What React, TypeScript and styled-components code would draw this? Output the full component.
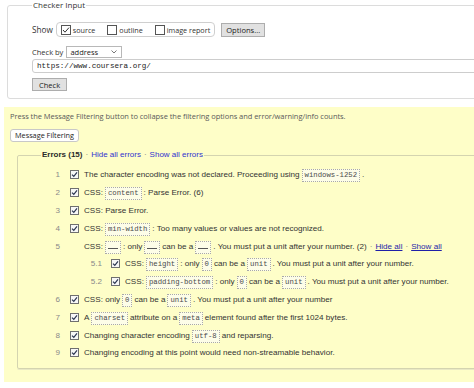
import React from 'react'
import styled, { createGlobalStyle } from 'styled-components'

const GlobalStyle = createGlobalStyle`
  html, body {
    margin: 0;
    padding: 0;
    background: #fff;
    overflow: hidden;
  }
  body {
    width: 474px;
    height: 388px;
  }
`

const Page = styled.div`
  width: 540px;
  font-family: 'Open Sans', 'Noto Sans', sans-serif;
  color: #333;
`

const InputFieldset = styled.fieldset`
  margin: 0 0 0 7px;
  padding: 0 0 7px 24px;
  border: 1px solid #dcdcdc;
  border-radius: 3px;
  display: flex;
  flex-direction: column;
  align-items: flex-start;
`

const InputLegend = styled.legend`
  padding: 0 1px;
  font-size: 8px;
  line-height: 10px;
  color: #333;
`

const ShowRow = styled.div`
  margin-top: 12px;
  display: flex;
  align-items: center;
  gap: 3px;
  font-size: 8.2px;
`

const ShowGroup = styled.div`
  height: 13px;
  display: flex;
  align-items: center;
  gap: 12px;
  padding: 0 4px;
  border: 1px solid #cfcfcf;
  border-radius: 4px;
  font-size: 7.2px;
`

const ShowOption = styled.label`
  display: flex;
  align-items: center;
  gap: 2px;
`

const GrayButton = styled.button`
  height: 14px;
  padding: 0 4px;
  margin: 0 0 0 ${props => props.slot || '0'};
  font-family: 'Open Sans', sans-serif;
  font-size: 7.6px;
  color: #222;
  background: #e1e1e1;
  border: 1px solid #adadad;
  border-radius: 0;
  line-height: 12px;
`

const CheckByRow = styled.div`
  margin-top: 9px;
  display: flex;
  align-items: center;
  gap: 3px;
  font-size: 7.5px;
`

const SelectBox = styled.div`
  width: 56px;
  height: 12px;
  box-sizing: border-box;
  border: 1px solid #b8b8b8;
  display: flex;
  align-items: center;
  justify-content: space-between;
  padding: 0 4px 0 3px;
  font-size: 7.5px;
  color: #222;
`

const UrlInput = styled.div`
  margin-top: 1px;
  width: 470px;
  height: 14px;
  box-sizing: border-box;
  border: 1px solid #cdcdcd;
  border-radius: 3px;
  padding: 0 4px;
  display: flex;
  align-items: center;
  font-family: 'Liberation Mono', monospace;
  font-size: 7.6px;
  color: #222;
`

const CheckButton = styled(GrayButton)`
  margin-top: 5px;
  height: 13px;
  padding: 0 6px;
  font-size: 7.5px;
`

const YellowArea = styled.div`
  margin: 8px 0 0 4px;
  padding: 4px 0 13px 6px;
  background: #fefec8;
`

const Hint = styled.div`
  font-size: 7.5px;
  line-height: 10px;
  letter-spacing: -0.05px;
  color: #5a5a5a;
`

const FilterButton = styled.button`
  margin-top: 5px;
  height: 13px;
  padding: 0 4px;
  font-family: 'Open Sans', sans-serif;
  font-size: 7.3px;
  color: #222;
  background: #fff;
  border: 1px solid #c8c8c8;
  border-radius: 3px;
  line-height: 11px;
`

const ErrorsFieldset = styled.fieldset`
  margin: 7px 0 0 7px;
  padding: 6px 0 6px 23px;
  border: 1px solid #d4d4b0;
  border-radius: 2px;
  box-shadow: 0 1px 0 #e9e9c4;
  font-family: 'Liberation Sans', Arial, sans-serif;
  font-size: 8.1px;
  color: #333;
`

const ErrorsLegend = styled.legend`
  padding: 0 1px;
  font-size: 8px;
  line-height: 10px;
  color: #333;
`

const LegendTitle = styled.span`
  font-weight: 600;
  color: #2a2a2a;
`

const Sep = styled.span`
  color: #777;
  margin: 0 3px;
`

const Link = styled.a`
  color: ${props => (props.slot === 'under' ? '#1f1fa8' : '#3232d0')};
  text-decoration: ${props => (props.slot === 'under' ? 'underline' : 'none')};
  cursor: pointer;
`

const Row = styled.div`
  display: flex;
  align-items: center;
  height: 17.8px;
`

const Num = styled.span`
  width: ${props => props.slot || '19px'};
  flex: none;
  text-align: right;
  color: #8a8a8a;
`

const BoxSlot = styled.span`
  width: 9px;
  height: 9px;
  flex: none;
  margin: 0 5px 0 ${props => props.slot || '10px'};
  display: flex;
`

const Msg = styled.span`
  white-space: nowrap;
`

const Code = styled.code`
  font-family: 'Liberation Mono', monospace;
  font-size: 7.3px;
  color: #4a4a4a;
  background: #fdfde8;
  border: 1px dotted #a9a9a9;
  padding: 1px 2px 2px;
  margin: 0 2px;
`

const Blank = styled.span`
  display: inline-block;
  width: 10px;
  height: 1px;
  background: #555;
  vertical-align: 0;
`

const Tick = ({ size = 9, checked = true }) => (
  <svg width={size} height={size} viewBox="0 0 9 9">
    <rect x="0.5" y="0.5" width="8" height="8" fill="#f7f7f7" stroke="#6f6f6f" />
    {checked && <path d="M2 4.6 L3.8 6.4 L7 2.4" fill="none" stroke="#2b3550" strokeWidth="1.2" />}
  </svg>
)

const OptionBox = ({ checked = false }) => (
  <svg width="10" height="10" viewBox="0 0 10 10">
    <rect x="0.5" y="0.5" width="9" height="9" fill="#fff" stroke="#555" />
    {checked && <path d="M2 5 L4 7.2 L8 2.6" fill="none" stroke="#333" strokeWidth="1" />}
  </svg>
)

const Chevron = () => (
  <svg width="6" height="4" viewBox="0 0 6 4">
    <path d="M0.5 0.5 L3 3 L5.5 0.5" fill="none" stroke="#555" strokeWidth="0.8" />
  </svg>
)

const ErrorRow = ({ n, check = true, nested = false, children }) => (
  <Row>
    <Num slot={nested ? '61px' : '19px'}>{n}</Num>
    <BoxSlot slot={nested ? '9px' : '10px'}>{check && <Tick />}</BoxSlot>
    <Msg>{children}</Msg>
  </Row>
)

const App = () => {
  return (
    <Page>
      <GlobalStyle />
      <InputFieldset>
        <InputLegend>Checker Input</InputLegend>
        <ShowRow>
          <span>Show</span>
          <ShowGroup>
            <ShowOption>
              <OptionBox checked />
              source
            </ShowOption>
            <ShowOption>
              <OptionBox />
              outline
            </ShowOption>
            <ShowOption>
              <OptionBox />
              image report
            </ShowOption>
          </ShowGroup>
          <GrayButton slot="3px">Options...</GrayButton>
        </ShowRow>
        <CheckByRow>
          <span>Check by</span>
          <SelectBox>
            address
            <Chevron />
          </SelectBox>
        </CheckByRow>
        <UrlInput>https://www.coursera.org/</UrlInput>
        <CheckButton>Check</CheckButton>
      </InputFieldset>

      <YellowArea>
        <Hint>
          Press the Message Filtering button to collapse the filtering options and error/warning/info counts.
        </Hint>
        <FilterButton>Message Filtering</FilterButton>
        <ErrorsFieldset>
          <ErrorsLegend>
            <LegendTitle>Errors (15)</LegendTitle>
            <Sep>·</Sep>
            <Link>Hide all errors</Link>
            <Sep>·</Sep>
            <Link>Show all errors</Link>
          </ErrorsLegend>
          <ErrorRow n="1">
            The character encoding was not declared. Proceeding using<Code>windows-1252</Code>.
          </ErrorRow>
          <ErrorRow n="2">
            CSS:<Code>content</Code>: Parse Error. (6)
          </ErrorRow>
          <ErrorRow n="3">CSS: Parse Error.</ErrorRow>
          <ErrorRow n="4">
            CSS:<Code>min-width</Code>: Too many values or values are not recognized.
          </ErrorRow>
          <ErrorRow n="5" check={false}>
            CSS:<Code><Blank /></Code>: only<Code><Blank /></Code>can be a<Code><Blank /></Code>. You must put a unit after your number. (2)
            <Sep>·</Sep>
            <Link slot="under">Hide all</Link>
            <Sep>·</Sep>
            <Link slot="under">Show all</Link>
          </ErrorRow>
          <ErrorRow n="5.1" nested>
            CSS:<Code>height</Code>: only<Code>0</Code>can be a<Code>unit</Code>. You must put a unit after your number.
          </ErrorRow>
          <ErrorRow n="5.2" nested>
            CSS:<Code>padding-bottom</Code>: only<Code>0</Code>can be a<Code>unit</Code>. You must put a unit after your number.
          </ErrorRow>
          <ErrorRow n="6">
            CSS: only<Code>0</Code>can be a<Code>unit</Code>. You must put a unit after your number
          </ErrorRow>
          <ErrorRow n="7">
            A<Code>charset</Code>attribute on a<Code>meta</Code>element found after the first 1024 bytes.
          </ErrorRow>
          <ErrorRow n="8">
            Changing character encoding<Code>utf-8</Code>and reparsing.
          </ErrorRow>
          <ErrorRow n="9">Changing encoding at this point would need non-streamable behavior.</ErrorRow>
        </ErrorsFieldset>
      </YellowArea>
    </Page>
  )
}

export default App
